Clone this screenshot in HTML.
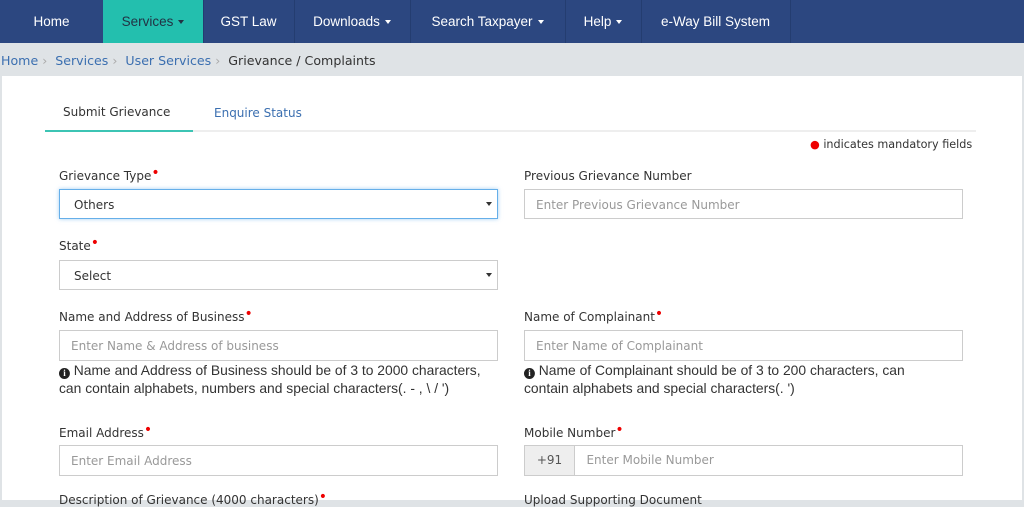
<!DOCTYPE html>
<html><head><style>
body{margin:0;width:1024px;height:500px;overflow:hidden;background:#dfe3e6;font-family:"DejaVu Sans",sans-serif;position:relative}
.a{position:absolute;white-space:nowrap}
.nav{position:absolute;left:0;top:0;width:1024px;height:43px;background:#2c4780;font-family:"Liberation Sans",sans-serif}
.ni{position:absolute;top:0;height:43px;line-height:43px;color:#fff;font-size:13.5px;text-align:center;border-right:1px solid #243d70}
.car{display:inline-block;width:0;height:0;border-left:3.5px solid transparent;border-right:3.5px solid transparent;border-top:4px solid currentColor;vertical-align:middle;margin-left:5px}
.main{position:absolute;left:2px;top:76px;width:1020px;height:424px;background:#fff}
.lbl{font-size:12px;color:#333;margin-top:1px}
.req{color:#e00;font-size:14px;line-height:10px;vertical-align:top;position:relative;top:-1px}
.inp{position:absolute;height:28px;border:1px solid #ccc;box-sizing:border-box;background:#fff;font-size:12px;color:#999;line-height:28px;padding-left:11px;overflow:hidden;white-space:nowrap}
.sel{color:#333}
.sel:after{content:"";position:absolute;right:5px;top:12px;border-left:3px solid transparent;border-right:3px solid transparent;border-top:4px solid #333}
.help{font-family:"Liberation Sans",sans-serif;font-size:14px;color:#333;line-height:18px;transform:scaleX(.99);transform-origin:0 0}
.i{display:inline-block;width:11px;height:11px;border-radius:50%;background:#222;color:#fff;font-size:9px;line-height:11px;text-align:center;font-weight:bold;vertical-align:-1px;font-family:"Liberation Serif",serif}
</style></head><body>
<div class="nav">
<div class="ni" style="left:0;width:103px">Home</div>
<div class="ni" style="left:103px;width:100px;background:#23bfae;color:#234;">Services<span class="car"></span></div>
<div class="ni" style="left:203px;width:91px">GST Law</div>
<div class="ni" style="left:294px;width:116px">Downloads<span class="car"></span></div>
<div class="ni" style="left:410px;width:155px">Search Taxpayer<span class="car"></span></div>
<div class="ni" style="left:565px;width:76px">Help<span class="car"></span></div>
<div class="ni" style="left:641px;width:149px">e-Way Bill System</div>
</div>
<div class="a" style="left:1px;top:53px;font-size:12.6px;color:#3b6fb0">Home<span style="color:#aaa"> › </span>&nbsp;Services<span style="color:#aaa"> › </span>&nbsp;User Services<span style="color:#aaa"> › </span>&nbsp;<span style="color:#333">Grievance / Complaints</span></div>
<div class="main"></div>
<div class="a" style="left:63px;top:105px;font-size:12px;color:#333">Submit Grievance</div>
<div class="a" style="left:214px;top:106px;font-size:12px;color:#3b6fb0">Enquire Status</div>
<div class="a" style="left:45px;top:130px;width:931px;height:2px;background:#eee"></div>
<div class="a" style="left:45px;top:130px;width:148px;height:2px;background:#3cc4b4"></div>
<div class="a" style="left:810px;top:138px;font-size:11.2px;color:#333"><span style="color:#e00">●</span> indicates mandatory fields</div>

<div class="a lbl" style="left:59px;top:168px">Grievance Type<span class="req">•</span></div>
<div class="inp sel" style="left:59px;top:189px;width:439px;height:30px;border-color:#66afe9;box-shadow:0 0 4px rgba(102,175,233,.6);line-height:30px;padding-left:14px">Others</div>
<div class="a lbl" style="left:524px;top:168px">Previous Grievance Number</div>
<div class="inp" style="left:524px;top:189px;width:439px;height:30px;line-height:30px">Enter Previous Grievance Number</div>

<div class="a lbl" style="left:59px;top:238px">State<span class="req">•</span></div>
<div class="inp sel" style="left:59px;top:260px;width:439px;height:30px;line-height:30px;padding-left:14px">Select</div>

<div class="a lbl" style="left:59px;top:309px">Name and Address of Business<span class="req">•</span></div>
<div class="inp" style="left:59px;top:330px;width:439px;height:31px;line-height:31px">Enter Name &amp; Address of business</div>
<div class="a help" style="left:59px;top:361px"><span class="i">i</span> Name and Address of Business should be of 3 to 2000 characters,<br>can contain alphabets, numbers and special characters(. - , \ / ')</div>
<div class="a lbl" style="left:524px;top:309px">Name of Complainant<span class="req">•</span></div>
<div class="inp" style="left:524px;top:330px;width:439px;height:31px;line-height:31px">Enter Name of Complainant</div>
<div class="a help" style="left:524px;top:361px"><span class="i">i</span> Name of Complainant should be of 3 to 200 characters, can<br>contain alphabets and special characters(. ')</div>

<div class="a lbl" style="left:59px;top:425px">Email Address<span class="req">•</span></div>
<div class="inp" style="left:59px;top:445px;width:439px;height:31px;line-height:31px">Enter Email Address</div>
<div class="a lbl" style="left:524px;top:425px">Mobile Number<span class="req">•</span></div>
<div class="inp" style="left:524px;top:445px;width:439px;height:31px;line-height:29px;padding-left:0"><span style="display:inline-block;width:49px;background:#eee;border-right:1px solid #ccc;text-align:center;color:#555">+91</span>&nbsp;&nbsp;&nbsp;Enter Mobile Number</div>

<div class="a lbl" style="left:59px;top:492px">Description of Grievance (4000 characters)<span class="req">•</span></div>
<div class="a lbl" style="left:524px;top:492px">Upload Supporting Document</div>
</body></html>
